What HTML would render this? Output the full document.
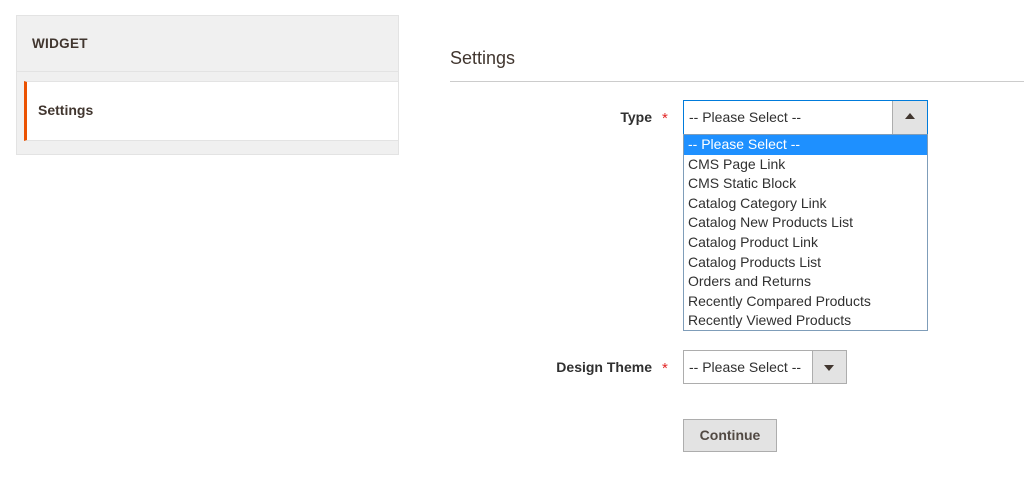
<!DOCTYPE html>
<html><head><style>
*{box-sizing:border-box;margin:0;padding:0}
body{width:1024px;height:491px;background:#fff;font-family:"Liberation Sans",sans-serif;color:#303030;position:relative;overflow:hidden}
.a{position:absolute}
</style></head><body>
<div class="a" style="left:16px;top:15px;width:383px;height:140px;background:#f0f0f0;border:1px solid #e3e3e3"></div>
<div class="a" style="left:17px;top:71px;width:381px;height:1px;background:#e3e3e3"></div>
<div class="a" style="left:32px;top:36px;font-size:13.5px;font-weight:bold;color:#41362f;letter-spacing:.3px">WIDGET</div>
<div class="a" style="left:24px;top:81px;width:374px;height:60px;background:#fff;border-left:3px solid #eb5202;border-top:1px solid #e3e3e3;border-bottom:1px solid #e3e3e3"></div>
<div class="a" style="left:38px;top:102px;font-size:14px;font-weight:bold;color:#41362f">Settings</div>
<div class="a" style="left:450px;top:48px;font-size:18px;color:#41362f">Settings</div>
<div class="a" style="left:450px;top:81px;width:574px;height:1px;background:#ccc"></div>
<div class="a" style="left:560px;top:109px;width:92px;text-align:right;font-size:14px;font-weight:bold;color:#303030">Type</div>
<div class="a" style="left:662px;top:110px;font-size:15px;color:#e22626">*</div>
<div class="a" style="left:683px;top:100px;width:245px;height:35px;border:1px solid #007bdb;background:#fff"></div>
<div class="a" style="left:689px;top:109px;font-size:14px;color:#303030">-- Please Select --</div>
<div class="a" style="left:892px;top:101px;width:35px;height:33px;background:#e3e3e3;border-left:1px solid #adadad"></div>
<div class="a" style="left:905px;top:113px;width:0;height:0;border-left:5px solid transparent;border-right:5px solid transparent;border-bottom:6px solid #41362f"></div>
<div class="a" style="left:683px;top:134px;width:245px;height:197px;border:1px solid #7f9db9;background:#fff;font-size:14px;line-height:19.6px;color:#303030">
<div style="background:#1e90ff;color:#fff;padding-left:4px">-- Please Select --</div>
<div style="padding-left:4px">CMS Page Link</div>
<div style="padding-left:4px">CMS Static Block</div>
<div style="padding-left:4px">Catalog Category Link</div>
<div style="padding-left:4px">Catalog New Products List</div>
<div style="padding-left:4px">Catalog Product Link</div>
<div style="padding-left:4px">Catalog Products List</div>
<div style="padding-left:4px">Orders and Returns</div>
<div style="padding-left:4px">Recently Compared Products</div>
<div style="padding-left:4px">Recently Viewed Products</div>
</div>
<div class="a" style="left:500px;top:359px;width:152px;text-align:right;font-size:14px;font-weight:bold;color:#303030">Design Theme</div>
<div class="a" style="left:662px;top:360px;font-size:15px;color:#e22626">*</div>
<div class="a" style="left:683px;top:350px;width:164px;height:34px;border:1px solid #adadad;background:#fff"></div>
<div class="a" style="left:689px;top:359px;font-size:14px;color:#303030">-- Please Select --</div>
<div class="a" style="left:812px;top:351px;width:34px;height:32px;background:#e3e3e3;border-left:1px solid #adadad"></div>
<div class="a" style="left:824px;top:365px;width:0;height:0;border-left:5px solid transparent;border-right:5px solid transparent;border-top:6px solid #41362f"></div>
<div class="a" style="left:683px;top:419px;width:94px;height:33px;background:#e3e3e3;border:1px solid #adadad;font-size:14px;font-weight:bold;color:#514943;text-align:center;line-height:31px">Continue</div>
</body></html>
